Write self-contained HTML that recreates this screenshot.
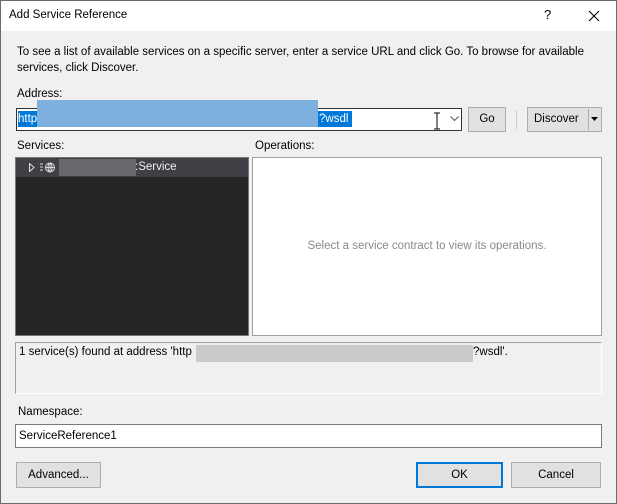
<!DOCTYPE html>
<html><head><style>
*{margin:0;padding:0;box-sizing:border-box}
body{width:617px;height:504px;background:#f0f0f0;font-family:"Segoe UI","Liberation Sans",sans-serif;font-size:11.5px;color:#000;position:relative;overflow:hidden}
.a{position:absolute;white-space:nowrap}
.btn{position:absolute;background:#e1e1e1;border:1px solid #adadad;text-align:center;line-height:23px}
</style></head><body>
<div class="a" style="left:0;top:0;width:617px;height:504px;border:1px solid #6b6b6b"></div>
<div class="a" style="left:1px;top:1px;width:615px;height:30px;background:#fff"></div>
<div class="a" style="left:9px;top:9px">Add Service Reference</div>
<div class="a" style="left:544px;top:7px;font-size:13px">?</div>
<svg class="a" style="left:588px;top:10px" width="12" height="12"><path d="M1 1L11 11M11 1L1 11" stroke="#000" stroke-width="1.1"/></svg>
<div class="a" style="left:17px;top:46px">To see a list of available services on a specific server, enter a service URL and click Go. To browse for available</div>
<div class="a" style="left:17px;top:62px">services, click Discover.</div>
<div class="a" style="left:17px;top:88px">Address:</div>
<div class="a" style="left:16px;top:108px;width:446px;height:23px;background:#fff;border:1px solid #333"></div>
<div class="a" style="left:18px;top:111px;width:334px;height:16px;background:#0078d7"></div>
<div class="a" style="left:18px;top:111px;color:#fff;line-height:16px">http</div>
<div class="a" style="left:37px;top:100px;width:281px;height:27px;background:#7eb0de"></div>
<div class="a" style="left:319px;top:111px;color:#fff;line-height:16px">?wsdl</div>
<svg class="a" style="left:432px;top:112px" width="10" height="18"><path d="M2 1H8M5 1V17M2 17H8" stroke="#000" stroke-width="1"/></svg>
<svg class="a" style="left:450px;top:116px" width="9" height="6"><path d="M0.5 0.5L4.5 4.5L8.5 0.5" stroke="#555" fill="none"/></svg>
<div class="btn" style="left:468px;top:107px;width:38px;height:25px">Go</div>
<div class="a" style="left:516px;top:110px;width:1px;height:19px;background:#ccc"></div>
<div class="btn" style="left:527px;top:107px;width:75px;height:25px;text-align:left;padding-left:6px">Discover</div>
<div class="a" style="left:588px;top:109px;width:1px;height:21px;background:#adadad"></div>
<svg class="a" style="left:591px;top:117px" width="7" height="4"><path d="M0 0H7L3.5 4Z" fill="#000"/></svg>
<div class="a" style="left:17px;top:140px">Services:</div>
<div class="a" style="left:255px;top:140px">Operations:</div>
<div class="a" style="left:15px;top:157px;width:234px;height:179px;background:#252526;border:1px solid #777"></div>
<div class="a" style="left:16px;top:158px;width:232px;height:19px;background:#3f3f46"></div>
<svg class="a" style="left:29px;top:163px" width="6" height="9"><path d="M0.5 0.5L5 4.5L0.5 8.5Z" fill="none" stroke="#ddd"/></svg>
<svg class="a" style="left:40px;top:161px" width="16" height="13"><path d="M0 3H3M0 6H3M0 9H3" stroke="#ddd"/><circle cx="10" cy="6.5" r="4.5" fill="none" stroke="#ddd"/><path d="M5.5 6.5H14.5M10 2V11" stroke="#ddd"/><ellipse cx="10" cy="6.5" rx="2" ry="4.5" fill="none" stroke="#ddd"/></svg>
<div class="a" style="left:59px;top:159px;width:77px;height:17px;background:#6a686c"></div>
<div class="a" style="left:135px;top:161px;color:#f0f0f0">:Service</div>
<div class="a" style="left:252px;top:157px;width:350px;height:179px;background:#fff;border:1px solid #a0a0a0"></div>
<div class="a" style="left:252px;top:240px;width:350px;text-align:center;color:#8a8a8a">Select a service contract to view its operations.</div>
<div class="a" style="left:15px;top:342px;width:587px;height:52px;border:1px solid #a0a0a0;border-right-color:#fff;border-bottom-color:#fff"></div>
<div class="a" style="left:19px;top:346px">1 service(s) found at address 'http</div>
<div class="a" style="left:196px;top:345px;width:277px;height:17px;background:#cbcbcb"></div>
<div class="a" style="left:473px;top:346px">?wsdl'.</div>
<div class="a" style="left:18px;top:406px">Namespace:</div>
<div class="a" style="left:15px;top:424px;width:587px;height:24px;background:#fff;border:1px solid #7a7a7a;padding-left:3px;line-height:22px">ServiceReference1</div>
<div class="btn" style="left:16px;top:462px;width:85px;height:26px;line-height:25px">Advanced...</div>
<div class="btn" style="left:416px;top:462px;width:87px;height:26px;border:2px solid #0078d7;line-height:23px">OK</div>
<div class="btn" style="left:511px;top:462px;width:90px;height:26px;line-height:25px">Cancel</div>
</body></html>
